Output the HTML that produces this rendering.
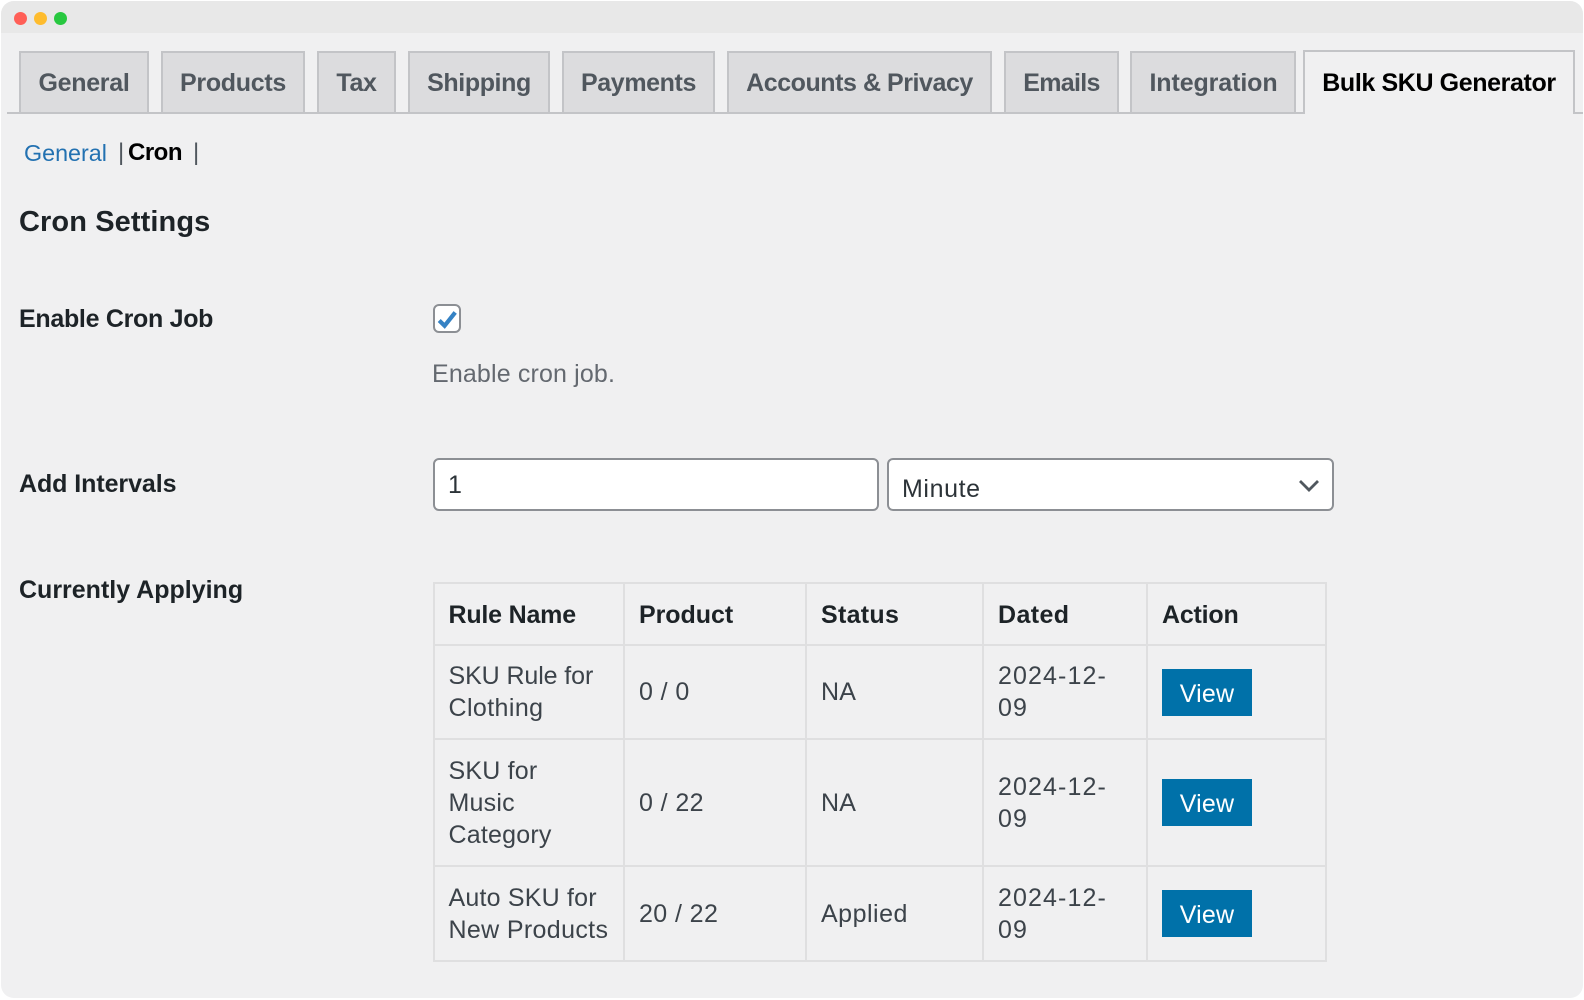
<!DOCTYPE html>
<html lang="en">
<head>
<meta charset="utf-8">
<title>Cron Settings</title>
<style>
html,body{margin:0;padding:0;background:#fff;width:1584px;height:1000px;overflow:hidden}
body{font-family:"Liberation Sans",Arial,sans-serif;position:relative}
#win{position:absolute;left:1px;top:1px;width:1582px;height:997px;background:#f0f0f1;border-radius:13px;overflow:hidden}
#bar{position:absolute;left:0;top:0;width:100%;height:32px;background:#e8e8e8}
.dot{position:absolute;top:10.5px;width:13px;height:13px;border-radius:50%}
.abs{position:absolute;white-space:nowrap;line-height:30px}
#line{position:absolute;left:6px;top:111px;width:1576px;height:2px;background:#c3c4c7}
.tab{position:absolute;top:50px;height:61px;box-sizing:border-box;background:#dcdcde;border:2px solid #c3c4c7;border-bottom:0;color:#50575e;font-weight:bold;font-size:25px;letter-spacing:-.3px;text-align:center;line-height:61px;white-space:nowrap}
.tab.on{top:49px;height:64px;background:#f0f0f1;color:#000;letter-spacing:-.38px;line-height:62px}
.lab{font-weight:bold;font-size:25px;letter-spacing:-.3px;color:#1d2327}
.fld{position:absolute;box-sizing:border-box;background:#fff;border:2px solid #8c8f94;border-radius:6px}
table{position:absolute;left:432px;top:581px;border-collapse:collapse;table-layout:fixed;width:892px}
td,th{border:2px solid #dfdfe0;padding:0 0 0 14px;text-align:left;font-size:25px;line-height:32px;color:#3c434a;letter-spacing:.2px;vertical-align:middle;box-sizing:border-box;font-weight:normal;white-space:nowrap}
td:first-child,th:first-child{padding-left:13.5px}
th{font-weight:bold;color:#1d2327;letter-spacing:-.2px;padding-top:1px}
.btn{display:block;width:90px;height:47px;background:#0071a9;color:#fff;text-align:center;line-height:50px;font-size:25px;letter-spacing:.2px}
.date{letter-spacing:1.1px}
.num{letter-spacing:.4px}
</style>
</head>
<body>
<div id="win">
  <div id="bar"></div>
  <div class="dot" style="left:13.2px;background:#ff5f57"></div>
  <div class="dot" style="left:33.2px;background:#febc2e"></div>
  <div class="dot" style="left:53.2px;background:#28c840"></div>

  <div id="line"></div>
  <div class="tab" style="left:18px;width:130px">General</div>
  <div class="tab" style="left:160px;width:144px">Products</div>
  <div class="tab" style="left:316px;width:79px">Tax</div>
  <div class="tab" style="left:407px;width:142px;letter-spacing:-.4px">Shipping</div>
  <div class="tab" style="left:561px;width:153px;letter-spacing:-.4px">Payments</div>
  <div class="tab" style="left:726px;width:265px;letter-spacing:-.45px">Accounts &amp; Privacy</div>
  <div class="tab" style="left:1003px;width:115px;letter-spacing:-.7px">Emails</div>
  <div class="tab" style="left:1129px;width:166px;letter-spacing:-.1px;padding-left:1px">Integration</div>
  <div class="tab on" style="left:1302px;width:272px">Bulk SKU Generator</div>

  <div class="abs" style="left:23px;top:137px;font-size:23.3px;color:#2271b1">General</div>
  <div class="abs" style="left:117px;top:137px;font-size:24px;color:#50575e">|</div>
  <div class="abs" style="left:127px;top:137px;font-size:24px;font-weight:bold;color:#000;letter-spacing:-.5px">Cron</div>
  <div class="abs" style="left:192px;top:137px;font-size:24px;color:#50575e">|</div>

  <div class="abs" style="left:18px;top:206px;font-size:29px;font-weight:bold;color:#1d2327;letter-spacing:.1px">Cron Settings</div>

  <div class="abs lab" style="left:18px;top:303px">Enable Cron Job</div>
  <div class="fld" style="left:432px;top:303px;width:28px;height:29px"></div>
  <svg style="position:absolute;left:431px;top:303px" width="29" height="29" viewBox="0 0 29 29"><path d="M7.2 16.5 L12.6 21.8 L23.2 8.4" fill="none" stroke="#3582c4" stroke-width="4.2"/></svg>
  <div class="abs" style="left:431px;top:358px;font-size:25px;color:#646970;letter-spacing:.15px">Enable cron job.</div>

  <div class="abs lab" style="left:18px;top:468px;letter-spacing:-.07px">Add Intervals</div>
  <div class="fld" style="left:432px;top:457px;width:446px;height:53px"></div>
  <div class="abs" style="left:447px;top:469px;font-size:25px;color:#2c3338">1</div>
  <div class="fld" style="left:886px;top:457px;width:447px;height:53px"></div>
  <div class="abs" style="left:901px;top:473px;font-size:25px;color:#2c3338;letter-spacing:.6px">Minute</div>
  <svg style="position:absolute;left:1295px;top:475px" width="28" height="18" viewBox="0 0 28 18"><path d="M4 5 L13 14 L22 5" fill="none" stroke="#50575e" stroke-width="2.8"/></svg>

  <div class="abs lab" style="left:18px;top:574px;letter-spacing:0">Currently Applying</div>

  <table>
    <colgroup><col style="width:190px"><col style="width:182px"><col style="width:177px"><col style="width:164px"><col style="width:179px"></colgroup>
    <tr style="height:62px"><th>Rule Name</th><th style="letter-spacing:-.05px">Product</th><th style="letter-spacing:.3px">Status</th><th style="letter-spacing:.4px">Dated</th><th>Action</th></tr>
    <tr style="height:94px"><td><span style="letter-spacing:-.1px">SKU Rule for</span><br><span style="letter-spacing:.4px">Clothing</span></td><td class="num">0 / 0</td><td>NA</td><td class="date">2024-12-<br>09</td><td><span class="btn">View</span></td></tr>
    <tr style="height:127px"><td>SKU for<br>Music<br>Category</td><td class="num">0 / 22</td><td>NA</td><td class="date">2024-12-<br>09</td><td><span class="btn">View</span></td></tr>
    <tr style="height:95px"><td>Auto SKU for<br><span style="letter-spacing:.35px">New Products</span></td><td class="num">20 / 22</td><td style="letter-spacing:.5px">Applied</td><td class="date">2024-12-<br>09</td><td><span class="btn">View</span></td></tr>
  </table>
</div>
</body>
</html>
